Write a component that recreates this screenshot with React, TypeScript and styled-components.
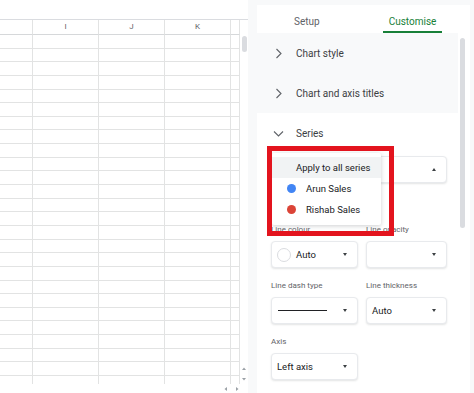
import React from "react";
import styled, { createGlobalStyle } from "styled-components";

const GlobalStyle = createGlobalStyle`
  html, body { margin: 0; padding: 0; }
  body { font-family: Roboto, "Liberation Sans", Arial, sans-serif; background: #f8f9fa; }
  * { box-sizing: border-box; }
`;

const Page = styled.div`
  position: relative;
  width: 474px;
  height: 393px;
  overflow: hidden;
  display: flex;
  align-items: flex-start;
  background: #f8f9fa;
`;

/* ---------- spreadsheet ---------- */
const Sheet = styled.div`
  width: 248px;
  height: 393px;
  flex: none;
  display: flex;
  flex-direction: column;
  background: #fff;
`;

const SheetTop = styled.div`
  height: 20px;
  flex: none;
  border-bottom: 1px solid #dadce0;
`;

const SheetBody = styled.div`
  height: 364px;
  flex: none;
  display: flex;
`;

const GridArea = styled.div`
  width: 240px;
  height: 364px;
  overflow: hidden;
  display: grid;
  grid-template-columns: 33px 66px 66px 66px 9px;
  grid-template-rows: 15px;
  grid-auto-rows: 13.65px;
`;

const Cell = styled.div<{ $header?: boolean }>`
  border-right: 1px solid #e2e3e3;
  border-bottom: 1px solid ${(p) => (p.$header ? "#d6d8da" : "#e2e3e3")};
  font-size: 8px;
  color: #5f6368;
  display: flex;
  align-items: center;
  justify-content: center;
  line-height: 1;
`;

const VScroll = styled.div`
  width: 8px;
  flex: none;
  display: flex;
  flex-direction: column;
  align-items: center;
`;

const VThumb = styled.div`
  margin-top: 16px;
  width: 5px;
  height: 16px;
  border-radius: 3px;
  background: #dadce0;
`;

const Spacer = styled.div`
  flex: 1;
`;

const ArrowBox = styled.div`
  width: 10px;
  height: 10px;
  display: flex;
  align-items: center;
  justify-content: center;
`;

const BottomBar = styled.div`
  height: 9px;
  flex: none;
  display: flex;
  justify-content: flex-end;
  align-items: center;
  padding-right: 6px;
  gap: 1px;
`;

const Arrow = ({ dir }: { dir: "up" | "down" | "left" | "right" }) => {
  const paths: Record<string, string> = {
    up: "M1 4 L3 1.5 L5 4 Z",
    down: "M1 2 L3 4.5 L5 2 Z",
    left: "M4 1 L1.5 3 L4 5 Z",
    right: "M2 1 L4.5 3 L2 5 Z",
  };
  return (
    <svg width="6" height="6" viewBox="0 0 6 6">
      <path d={paths[dir]} fill="#9aa0a6" />
    </svg>
  );
};

/* ---------- side panel ---------- */
const Panel = styled.div`
  margin-left: 9px;
  margin-top: 5px;
  width: 213px;
  height: 388px;
  flex: none;
  background: #fff;
  display: flex;
  flex-direction: column;
`;

const TabRow = styled.div`
  height: 28px;
  flex: none;
  display: flex;
  padding-left: 31px;
  gap: 57px;
`;

const Tab = styled.div<{ $active?: boolean }>`
  height: 28px;
  padding: 7px 6px 0;
  display: flex;
  align-items: center;
  font-size: 10px;
  color: ${(p) => (p.$active ? "#188038" : "#5f6368")};
  border-bottom: 2px solid ${(p) => (p.$active ? "#188038" : "transparent")};
`;

const PanelBody = styled.div`
  flex: 1;
  display: flex;
  min-height: 0;
`;

const Content = styled.div`
  width: 201px;
  flex: none;
  display: flex;
  flex-direction: column;
`;

const PanelScroll = styled.div`
  flex: 1;
  display: flex;
  justify-content: center;
  padding-right: 3px;
`;

const PanelThumb = styled.div`
  margin-top: 5px;
  width: 5px;
  height: 190px;
  border-radius: 3px;
  background: #dadce0;
`;

const SectionGroup = styled.div`
  background: #f8f9fa;
  display: flex;
  flex-direction: column;
`;

const SectionRow = styled.div`
  height: 40px;
  display: flex;
  align-items: center;
  gap: 12px;
  padding-left: 16px;
  font-size: 10px;
  color: #3c4043;
`;

const Chevron = ({ open }: { open?: boolean }) => (
  <svg width="11" height="11" viewBox="0 0 11 11">
    <path
      d={open ? "M1 3.5 L5.5 8 L10 3.5" : "M3.5 1 L8 5.5 L3.5 10"}
      fill="none"
      stroke="#5f6368"
      strokeWidth="1.1"
    />
  </svg>
);

const SeriesBody = styled.div`
  display: flex;
  flex-direction: column;
  padding: 3px 11px 0 14px;
`;

const Anchor = styled.div`
  position: relative;
`;

const Select = styled.div<{ $pad?: number }>`
  height: 27px;
  display: flex;
  align-items: center;
  padding: 0 10px 0 ${(p) => p.$pad ?? 5}px;
  background: #fff;
  border: 1px solid #e8eaed;
  border-radius: 4px;
  box-shadow: 0 1px 2px rgba(60, 64, 67, 0.14);
  font-size: 9.5px;
  color: #202124;
`;

const Caret = styled.span<{ $up?: boolean }>`
  margin-left: auto;
  width: 0;
  height: 0;
  border-left: 2.5px solid transparent;
  border-right: 2.5px solid transparent;
  ${(p) =>
    p.$up ? "border-bottom: 3px solid #3c4043;" : "border-top: 3px solid #3c4043;"}
`;

const Menu = styled.div`
  position: absolute;
  left: 1px;
  top: -3px;
  width: 109px;
  height: 72px;
  padding-top: 4px;
  background: #fff;
  border-radius: 2px;
  box-shadow: 0 1px 4px rgba(60, 64, 67, 0.25);
  display: flex;
  flex-direction: column;
  z-index: 2;
`;

const MenuItem = styled.div<{ $hl?: boolean; $pad: number }>`
  height: 21px;
  display: flex;
  align-items: center;
  gap: 10px;
  padding-left: ${(p) => p.$pad}px;
  font-size: 9.5px;
  color: #202124;
  background: ${(p) => (p.$hl ? "#f1f3f4" : "transparent")};
`;

const Dot = styled.span<{ $color: string }>`
  width: 9px;
  height: 9px;
  border-radius: 50%;
  background: ${(p) => p.$color};
  flex: none;
`;

const FieldGrid = styled.div`
  margin-top: 42px;
  display: grid;
  grid-template-columns: 87px 81px;
  column-gap: 8px;
  row-gap: 13px;
`;

const Field = styled.div`
  display: flex;
  flex-direction: column;
  gap: 6px;
`;

const Label = styled.div`
  font-size: 8px;
  line-height: 10px;
  height: 10px;
  color: #5f6368;
  white-space: nowrap;
`;

const Swatch = styled.span`
  width: 14px;
  height: 14px;
  border-radius: 50%;
  border: 1px solid #dadce0;
  background: #fff;
  margin-right: 5px;
  flex: none;
`;

const DashLine = styled.span`
  width: 49px;
  height: 1.5px;
  background: #202124;
`;

const Annotation = styled.div`
  position: absolute;
  left: 267px;
  top: 146px;
  width: 127px;
  height: 90px;
  border: 5px solid #e3141e;
  z-index: 5;
  pointer-events: none;
`;

const columns = ["", "I", "J", "K", ""];

export default function App() {
  const rows = Array.from({ length: 27 });
  return (
    <>
      <GlobalStyle />
      <Page>
        <Sheet>
          <SheetTop />
          <SheetBody>
            <GridArea>
              {columns.map((c, i) => (
                <Cell key={`h${i}`} $header>
                  {c}
                </Cell>
              ))}
              {rows.map((_, r) =>
                columns.map((_c, i) => <Cell key={`${r}-${i}`} />)
              )}
            </GridArea>
            <VScroll>
              <VThumb />
              <Spacer />
              <ArrowBox>
                <Arrow dir="up" />
              </ArrowBox>
              <ArrowBox>
                <Arrow dir="down" />
              </ArrowBox>
            </VScroll>
          </SheetBody>
          <BottomBar>
            <ArrowBox>
              <Arrow dir="left" />
            </ArrowBox>
            <ArrowBox>
              <Arrow dir="right" />
            </ArrowBox>
          </BottomBar>
        </Sheet>

        <Panel>
          <TabRow>
            <Tab>Setup</Tab>
            <Tab $active>Customise</Tab>
          </TabRow>
          <PanelBody>
            <Content>
              <SectionGroup>
                <SectionRow>
                  <Chevron />
                  Chart style
                </SectionRow>
                <SectionRow>
                  <Chevron />
                  Chart and axis titles
                </SectionRow>
              </SectionGroup>
              <SectionRow>
                <Chevron open />
                Series
              </SectionRow>
              <SeriesBody>
                <Anchor>
                  <Select>
                    <Caret $up />
                  </Select>
                  <Menu>
                    <MenuItem $hl $pad={24}>
                      Apply to all series
                    </MenuItem>
                    <MenuItem $pad={15}>
                      <Dot $color="#4285f4" />
                      Arun Sales
                    </MenuItem>
                    <MenuItem $pad={15}>
                      <Dot $color="#db4437" />
                      Rishab Sales
                    </MenuItem>
                  </Menu>
                </Anchor>
                <FieldGrid>
                  <Field>
                    <Label>Line colour</Label>
                    <Select>
                      <Swatch />
                      Auto
                      <Caret />
                    </Select>
                  </Field>
                  <Field>
                    <Label>Line opacity</Label>
                    <Select>
                      <Caret />
                    </Select>
                  </Field>
                  <Field>
                    <Label>Line dash type</Label>
                    <Select $pad={6}>
                      <DashLine />
                      <Caret />
                    </Select>
                  </Field>
                  <Field>
                    <Label>Line thickness</Label>
                    <Select>
                      Auto
                      <Caret />
                    </Select>
                  </Field>
                  <Field>
                    <Label>Axis</Label>
                    <Select>
                      Left axis
                      <Caret />
                    </Select>
                  </Field>
                </FieldGrid>
              </SeriesBody>
            </Content>
            <PanelScroll>
              <PanelThumb />
            </PanelScroll>
          </PanelBody>
        </Panel>
        <Annotation />
      </Page>
    </>
  );
}
